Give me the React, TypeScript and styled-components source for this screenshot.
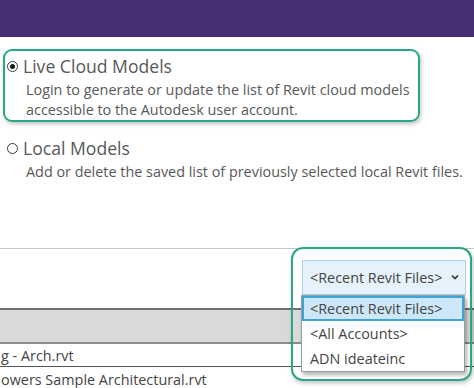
import React, { useState } from "react";
import styled, { createGlobalStyle, css } from "styled-components";

const GlobalStyle = createGlobalStyle`
  html, body {
    margin: 0;
    padding: 0;
    background: #ffffff;
  }
  body {
    font-family: "Open Sans", "Noto Sans", sans-serif;
    color: #4a4a4a;
    overflow: hidden;
  }
`;

const Page = styled.div`
  width: 474px;
  height: 388px;
  overflow: hidden;
  display: flex;
  flex-direction: column;
`;

const Header = styled.div`
  height: 37px;
  flex-shrink: 0;
  background: #462f72;
`;

const Options = styled.div`
  display: flex;
  flex-direction: column;
  gap: 9px;
  padding: 12px 0 0 3px;
`;

const OptionCard = styled.label<{ $highlight?: boolean }>`
  display: flex;
  flex-direction: column;
  width: 417px;
  box-sizing: border-box;
  padding: 4px 0 1px 2px;
  border: 2px solid transparent;
  border-radius: 9px;
  cursor: pointer;
  ${(p) =>
    p.$highlight &&
    css`
      border-color: #27a688;
      box-shadow: 1px 2px 4px rgba(0, 0, 0, 0.25);
    `}
`;

const OptionTitle = styled.div`
  display: flex;
  align-items: center;
  gap: 5px;
  font-size: 17.6px;
  line-height: 23px;
  color: #585858;
`;

const Radio = styled.span<{ $checked?: boolean }>`
  width: 9px;
  height: 9px;
  border: 1px solid #3a3a3a;
  border-radius: 50%;
  display: flex;
  align-items: center;
  justify-content: center;
  flex-shrink: 0;
  &::after {
    content: "";
    width: 5px;
    height: 5px;
    border-radius: 50%;
    background: ${(p) => (p.$checked ? "#1a1a1a" : "transparent")};
  }
`;

const OptionText = styled.div`
  padding-left: 19px;
  margin-top: 2px;
  font-size: 14.4px;
  line-height: 19.5px;
  color: #585858;
  white-space: nowrap;
`;

const Toolbar = styled.div`
  position: relative;
  margin-top: 63px;
  height: 60px;
  flex-shrink: 0;
  border-top: 1px solid #c8c8c8;
  display: flex;
  justify-content: flex-end;
  align-items: flex-start;
  padding: 11px 8px 0 0;
  box-sizing: border-box;
`;

const SelectBox = styled.div`
  width: 164px;
  height: 35px;
  box-sizing: border-box;
  background: #e5f1fb;
  border: 1px solid #a9d3f1;
  display: flex;
  align-items: center;
  justify-content: space-between;
  padding: 0 6px 0 7px;
  font-size: 14.4px;
  color: #444444;
  cursor: pointer;
`;

const Chevron = styled.svg`
  width: 8px;
  height: 6px;
`;

const DropList = styled.ul`
  position: absolute;
  top: 46px;
  right: 9px;
  width: 164px;
  margin: 0;
  padding: 0;
  list-style: none;
  background: #ffffff;
  border: 1px solid #9a9a9a;
  box-sizing: border-box;
  box-shadow: 2px 3px 4px rgba(0, 0, 0, 0.3);
  z-index: 3;
`;

const DropItem = styled.li<{ $active?: boolean }>`
  height: 25px;
  box-sizing: border-box;
  display: flex;
  align-items: center;
  padding-left: 6px;
  font-size: 14.4px;
  color: #444444;
  border: 2px solid transparent;
  ${(p) =>
    p.$active &&
    css`
      background: #cce8f8;
      border-color: #3fa3da;
    `}
`;

const Annotation = styled.div`
  position: absolute;
  top: -2px;
  right: 2px;
  width: 181px;
  height: 134px;
  box-sizing: border-box;
  border: 2px solid #27a688;
  border-radius: 12px;
  box-shadow: 1px 2px 4px rgba(0, 0, 0, 0.25);
  pointer-events: none;
  z-index: 4;
`;

const Table = styled.div`
  border-top: 2px solid #707070;
  display: flex;
  flex-direction: column;
`;

const HeadRow = styled.div`
  height: 32px;
  background: #d9d9d9;
  border-bottom: 2px solid #8c8c8c;
`;

const Row = styled.div<{ $last?: boolean }>`
  height: 23px;
  display: flex;
  align-items: center;
  font-size: 14.4px;
  color: #444444;
  padding-left: 1px;
  padding-top: 2px;
  box-sizing: border-box;
  white-space: nowrap;
  border-bottom: ${(p) => (p.$last ? "none" : "1px solid #555555")};
`;

const sources = ["<Recent Revit Files>", "<All Accounts>", "ADN ideateinc"];

export default function App() {
  const [mode, setMode] = useState<"cloud" | "local">("cloud");
  const [source, setSource] = useState(sources[0]);

  return (
    <>
      <GlobalStyle />
      <Page>
        <Header />
        <Options>
          <OptionCard $highlight onClick={() => setMode("cloud")}>
            <OptionTitle>
              <Radio $checked={mode === "cloud"} />
              Live Cloud Models
            </OptionTitle>
            <OptionText>
              Login to generate or update the list of Revit cloud models
              <br />
              accessible to the Autodesk user account.
            </OptionText>
          </OptionCard>
          <OptionCard onClick={() => setMode("local")}>
            <OptionTitle>
              <Radio $checked={mode === "local"} />
              Local Models
            </OptionTitle>
            <OptionText>
              Add or delete the saved list of previously selected local Revit files.
            </OptionText>
          </OptionCard>
        </Options>
        <Toolbar>
          <SelectBox>
            {source}
            <Chevron viewBox="0 0 8 6">
              <path d="M1 1.5 L4 4.5 L7 1.5" fill="none" stroke="#333" strokeWidth="1.6" />
            </Chevron>
          </SelectBox>
          <DropList>
            {sources.map((s) => (
              <DropItem key={s} $active={s === source} onClick={() => setSource(s)}>
                {s}
              </DropItem>
            ))}
          </DropList>
          <Annotation />
        </Toolbar>
        <Table>
          <HeadRow />
          <Row>g - Arch.rvt</Row>
          <Row $last>owers Sample Architectural.rvt</Row>
        </Table>
      </Page>
    </>
  );
}
